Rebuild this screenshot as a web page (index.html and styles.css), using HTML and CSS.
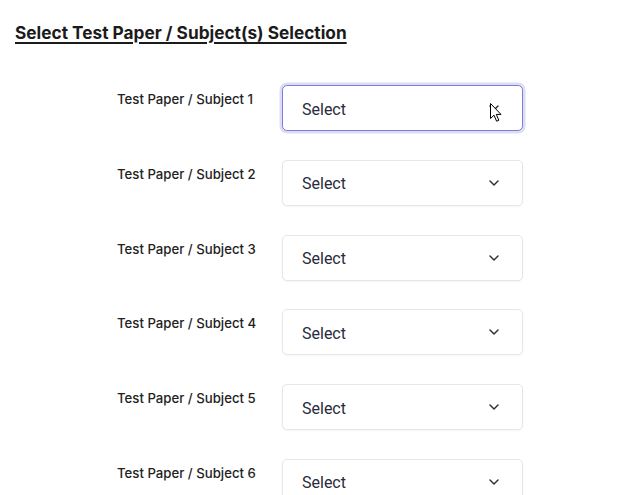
FILE: index.html
```html
<!DOCTYPE html>
<html lang="en">
<head>
<meta charset="utf-8">
<title>Select Test Paper</title>
<link rel="stylesheet" href="styles.css">
</head>
<body>
<main class="page">
  <h2 class="title">Select Test Paper / Subject(s) Selection</h2>
  <div class="rows">
    <div class="row">
      <label class="label">Test Paper / Subject 1</label>
      <div class="select focused">
        <span class="value">Select</span>
        <svg class="chev" viewBox="0 0 10 6" width="10" height="6"><path d="M1 1l4 4 4-4" fill="none" stroke="#333" stroke-width="1.5" stroke-linecap="round" stroke-linejoin="round"/></svg>
        <svg class="cursor" viewBox="0 0 12 19" width="12" height="19"><path d="M0.5 0.5 L0.5 15.5 L4 12.2 L6.6 18.2 L8.8 17.3 L6.3 11.4 L11 11.4 Z" fill="#fff" stroke="#000" stroke-width="1" stroke-linejoin="miter"/></svg>
      </div>
    </div>
    <div class="row">
      <label class="label">Test Paper / Subject 2</label>
      <div class="select">
        <span class="value">Select</span>
        <svg class="chev" viewBox="0 0 10 6" width="10" height="6"><path d="M1 1l4 4 4-4" fill="none" stroke="#333" stroke-width="1.5" stroke-linecap="round" stroke-linejoin="round"/></svg>
      </div>
    </div>
    <div class="row">
      <label class="label">Test Paper / Subject 3</label>
      <div class="select">
        <span class="value">Select</span>
        <svg class="chev" viewBox="0 0 10 6" width="10" height="6"><path d="M1 1l4 4 4-4" fill="none" stroke="#333" stroke-width="1.5" stroke-linecap="round" stroke-linejoin="round"/></svg>
      </div>
    </div>
    <div class="row">
      <label class="label">Test Paper / Subject 4</label>
      <div class="select">
        <span class="value">Select</span>
        <svg class="chev" viewBox="0 0 10 6" width="10" height="6"><path d="M1 1l4 4 4-4" fill="none" stroke="#333" stroke-width="1.5" stroke-linecap="round" stroke-linejoin="round"/></svg>
      </div>
    </div>
    <div class="row">
      <label class="label">Test Paper / Subject 5</label>
      <div class="select">
        <span class="value">Select</span>
        <svg class="chev" viewBox="0 0 10 6" width="10" height="6"><path d="M1 1l4 4 4-4" fill="none" stroke="#333" stroke-width="1.5" stroke-linecap="round" stroke-linejoin="round"/></svg>
      </div>
    </div>
    <div class="row">
      <label class="label">Test Paper / Subject 6</label>
      <div class="select">
        <span class="value">Select</span>
        <svg class="chev" viewBox="0 0 10 6" width="10" height="6"><path d="M1 1l4 4 4-4" fill="none" stroke="#333" stroke-width="1.5" stroke-linecap="round" stroke-linejoin="round"/></svg>
      </div>
    </div>
  </div>
</main>
</body>
</html>
```

FILE: styles.css
```css
html, body {
  margin: 0;
  padding: 0;
  background: #ffffff;
  overflow: hidden;
}
body {
  font-family: Roboto, "Liberation Sans", sans-serif;
  color: #222;
}
.page {
  padding: 22px 15px 0 15px;
}
.title {
  margin: 0;
  font-family: Inter, Roboto, sans-serif;
  font-size: 17.25px;
  line-height: 22px;
  font-weight: 700;
  color: #1b1b1b;
  text-decoration: underline;
  text-decoration-thickness: 2px;
  text-underline-offset: 3px;
}
.rows {
  margin-top: 41px;
  margin-left: 102px;
  display: flex;
  flex-direction: column;
  gap: 28.8px;
}
.row {
  display: flex;
  align-items: flex-start;
}
.label {
  width: 165px;
  font-family: Inter, Roboto, sans-serif;
  font-size: 13.2px;
  line-height: 18px;
  font-weight: 500;
  color: #222;
  margin-top: 5px;
}
.select {
  position: relative;
  box-sizing: border-box;
  width: 241px;
  height: 46px;
  border: 1px solid #e6e6e6;
  border-radius: 5px;
  box-shadow: 0 1px 2px rgba(0,0,0,0.04);
  display: flex;
  align-items: center;
  justify-content: space-between;
  padding: 0 23px 0 19px;
  background: #fff;
}
.select.focused {
  border: 1.5px solid #7e7edc;
  box-shadow: 0 0 0 2.5px #dcdcf7;
}
.value {
  font-size: 16px;
  color: #2a2a3a;
  padding-top: 2px;
}
.chev {
  display: block;
}
.cursor {
  position: absolute;
  left: 207px;
  top: 17px;
}
```
